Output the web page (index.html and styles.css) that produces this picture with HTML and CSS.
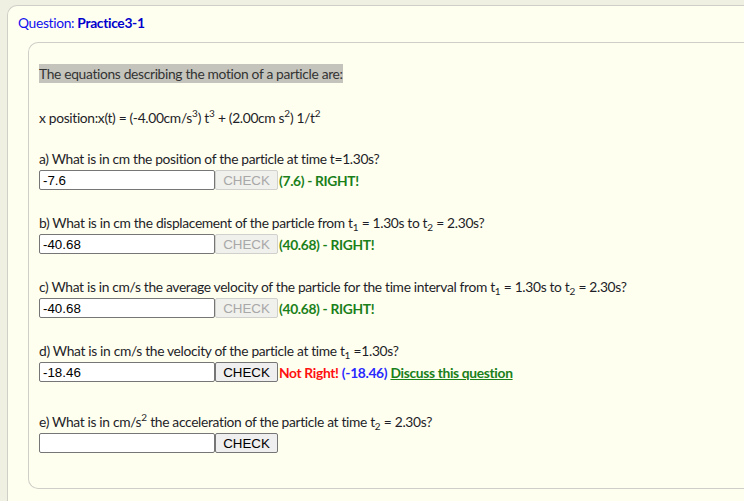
FILE: index.html
```html
<!DOCTYPE html>
<html>
<head>
<meta charset="utf-8">
<link rel="stylesheet" href="styles.css">
</head>
<body>
<div class="outer">
  <div class="qtitle">Question: <b>Practice3-1</b></div>
  <div class="inner">
    <p class="intro"><span class="hl">The equations describing the motion of a particle are:</span></p>
    <p class="formula">x position:x(t) = (-4.00cm/s<sup>3</sup>) t<sup>3</sup> + (2.00cm s<sup>2</sup>) 1/t<sup>2</sup></p>

    <div class="q first">
      <div class="label">a) What is in cm the position of the particle at time t=1.30s?</div>
      <div class="row">
        <input class="answer" type="text" value="-7.6">
        <button class="check" disabled>CHECK</button>
        <span class="ok">(7.6) - RIGHT!</span>
      </div>
    </div>

    <div class="q">
      <div class="label">b) What is in cm the displacement of the particle from t<sub>1</sub> = 1.30s to t<sub>2</sub> = 2.30s?</div>
      <div class="row">
        <input class="answer" type="text" value="-40.68">
        <button class="check" disabled>CHECK</button>
        <span class="ok">(40.68) - RIGHT!</span>
      </div>
    </div>

    <div class="q">
      <div class="label">c) What is in cm/s the average velocity of the particle for the time interval from t<sub>1</sub> = 1.30s to t<sub>2</sub> = 2.30s?</div>
      <div class="row">
        <input class="answer" type="text" value="-40.68">
        <button class="check" disabled>CHECK</button>
        <span class="ok">(40.68) - RIGHT!</span>
      </div>
    </div>

    <div class="q">
      <div class="label">d) What is in cm/s the velocity of the particle at time t<sub>1</sub> =1.30s?</div>
      <div class="row">
        <input class="answer" type="text" value="-18.46">
        <button class="check">CHECK</button>
        <span class="bad">Not Right!</span>&nbsp;<span class="correct">(-18.46)</span>&nbsp;<a class="discuss" href="#">Discuss this question</a>
      </div>
    </div>

    <div class="q last">
      <div class="label">e) What is in cm/s<sup>2</sup> the acceleration of the particle at time t<sub>2</sub> = 2.30s?</div>
      <div class="row">
        <input class="answer" type="text" value="">
        <button class="check">CHECK</button>
      </div>
    </div>
  </div>
</div>
</body>
</html>
```

FILE: styles.css
```css
html, body {
  margin: 0;
  padding: 0;
  height: 100%;
  overflow: hidden;
}
body {
  background: #f0f0e2;
  font-family: Lato, "Open Sans", sans-serif;
  font-size: 13.8px;
  letter-spacing: -0.33px;
  color: #1e1e28;
}
.outer {
  margin: 5px 0 0 7px;
  width: 737px;
  height: 496px;
  background: #fffff0;
  border: 1px solid #cfcfc8;
  border-right: none;
  border-bottom: none;
  border-radius: 10px 0 0 0;
  padding: 8px 0 0 10px;
  box-sizing: border-box;
}
.qtitle {
  color: #1010ee;
  line-height: 18px;
  height: 18px;
}
.qtitle b {
  color: #0000cc;
}
.inner {
  margin: 10px 0 0 10px;
  width: 716px;
  height: 447px;
  border: 1px solid #cfcfc8;
  border-right: none;
  border-radius: 10px 0 0 10px;
  padding: 22px 0 0 10px;
  box-sizing: border-box;
}
p {
  margin: 0;
  line-height: 18px;
}
.hl {
  background: #c4c4bc;
  color: #333;
  padding: 1px 0;
}
.formula {
  margin-top: 26px;
}
sup, sub {
  font-size: 10px;
  line-height: 0;
  letter-spacing: 0;
}
sup { vertical-align: 6px; }
sub { vertical-align: -3px; }
.q {
  margin-top: 24px;
}
.q.first {
  margin-top: 23px;
}
.q.last {
  margin-top: 31px;
}
.label {
  line-height: 18px;
  height: 18px;
}
.row {
  display: flex;
  align-items: center;
  margin-top: 2px;
  height: 20px;
  white-space: nowrap;
}
.answer {
  width: 176px;
  height: 20px;
  box-sizing: border-box;
  margin: 0;
  padding: 0 3px;
  border: 1px solid #767676;
  border-radius: 2px;
  background: #fff;
  font-family: "Liberation Sans", Arial, sans-serif;
  font-size: 13.33px;
  letter-spacing: 0;
  color: #000;
}
.check {
  width: 63px;
  height: 20px;
  box-sizing: border-box;
  margin: 0 1px 0 0;
  padding: 0;
  border: 1px solid #767676;
  border-radius: 2px;
  background: #efefef;
  font-family: "Liberation Sans", Arial, sans-serif;
  font-size: 13.33px;
  letter-spacing: 0;
  color: #000;
}
.check:disabled {
  border-color: #d0d0cc;
  color: #a8a8a8;
  background: #f0f0ec;
}
.ok {
  color: #1a801a;
  font-weight: bold;
}
.bad {
  color: #ff1010;
  font-weight: bold;
}
.correct {
  color: #2a2aff;
  font-weight: bold;
}
.discuss {
  color: #1a801a;
  font-weight: bold;
  text-decoration: underline;
}
```
